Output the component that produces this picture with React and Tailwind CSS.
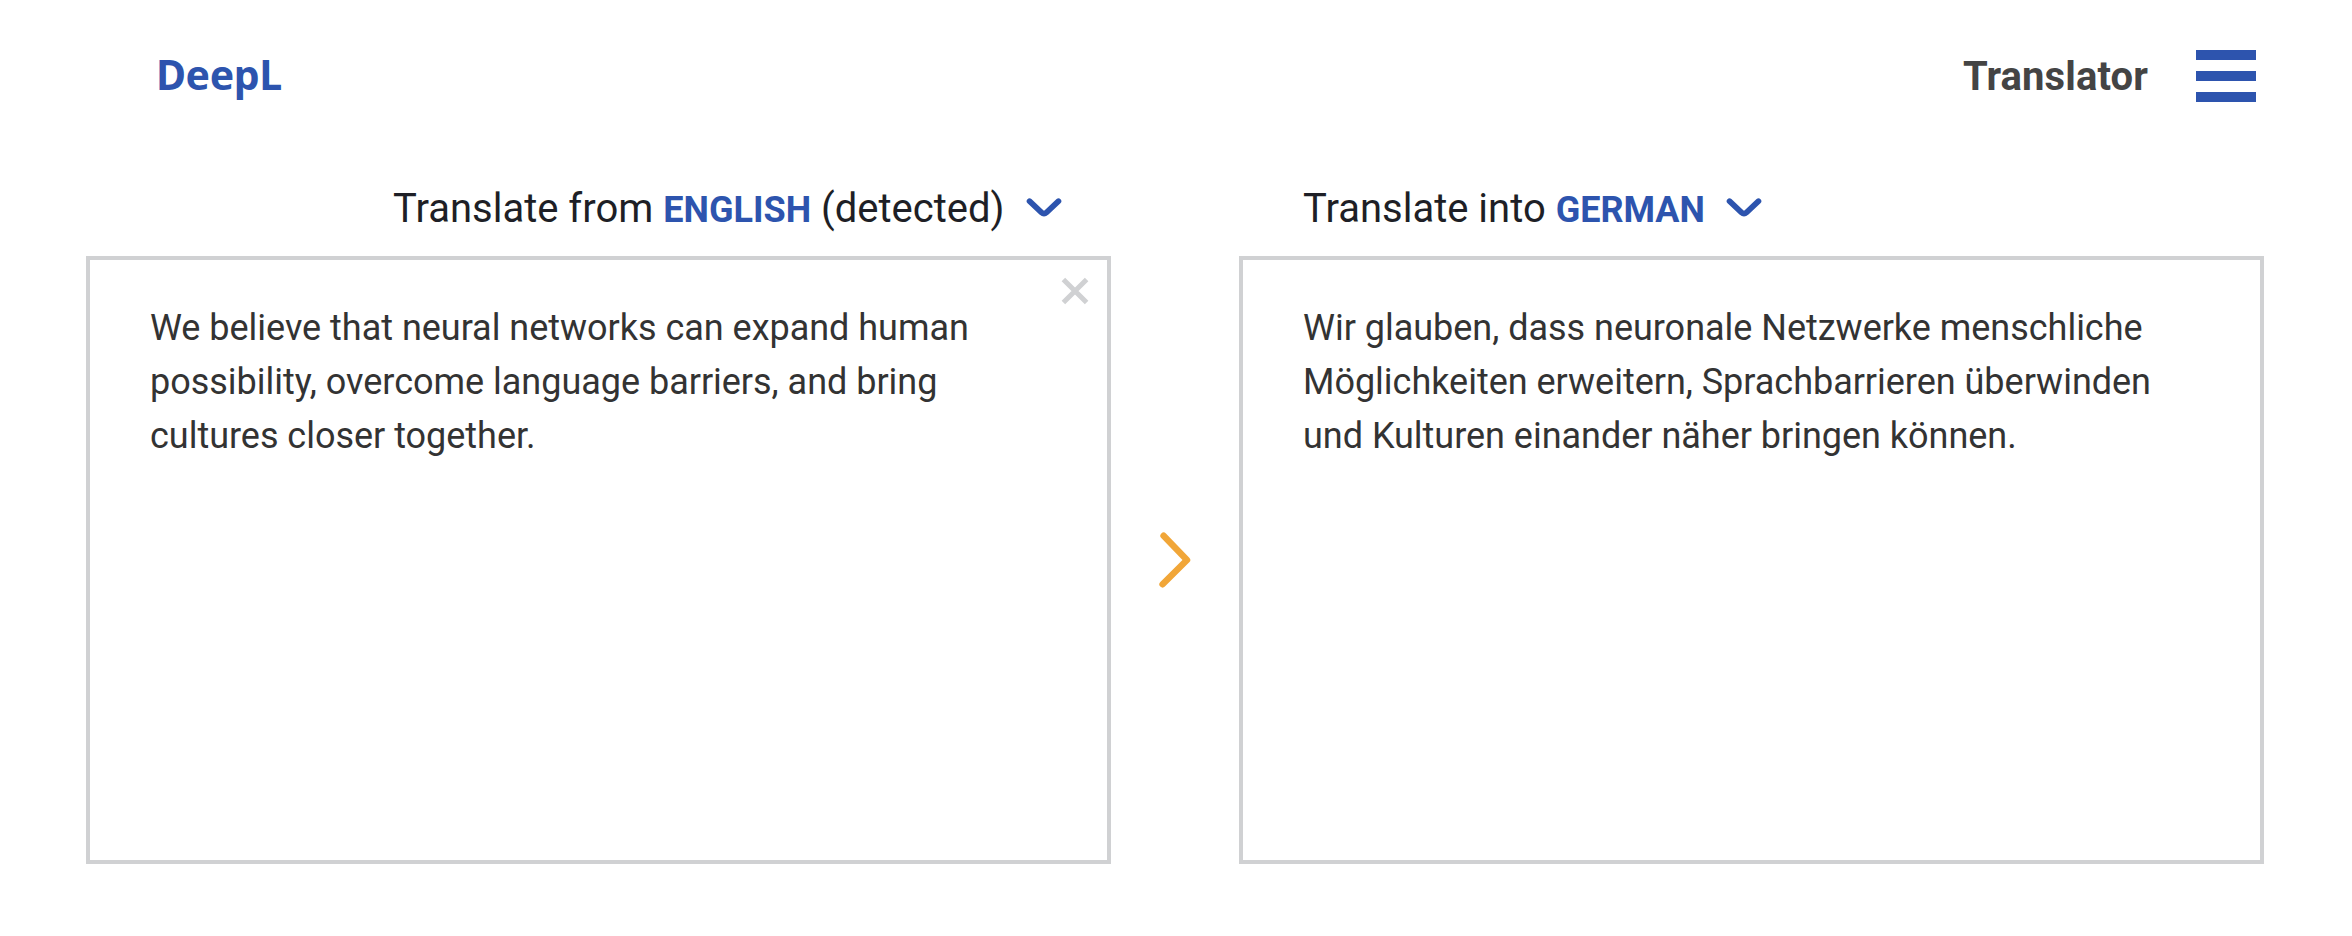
function Chevron() {
  return (
    <svg className="h-6 w-9 shrink-0" viewBox="0 0 36 24" fill="none">
      <path d="M3.5 4.1L15.4 15.4Q18 17.8 20.6 15.4L32.5 4.1" stroke="#2d54ae" strokeWidth="5.6" strokeLinecap="round" strokeLinejoin="round" />
    </svg>
  );
}

const source = [
  "We believe that neural networks can expand human",
  "possibility, overcome language barriers, and bring",
  "cultures closer together.",
];

const target = [
  "Wir glauben, dass neuronale Netzwerke menschliche",
  "Möglichkeiten erweitern, Sprachbarrieren überwinden",
  "und Kulturen einander näher bringen können.",
];

export default function App() {
  return (
    <div className="h-[936px] w-[2352px] overflow-hidden bg-white font-[Roboto,sans-serif] text-[#1e1f26]">
      <header className="flex h-[152px] items-center justify-between pr-24 pl-[156px]">
        <div className="pb-[3px] font-['Noto_Sans',sans-serif] text-[41px] leading-none font-bold tracking-[-0.4px] text-[#2d54ae]">
          DeepL
        </div>
        <div className="flex items-center gap-12">
          <span className="pt-0.5 text-[40px] leading-[60px] font-bold tracking-[0.1px] text-[#444]">Translator</span>
          <div className="flex w-[60px] flex-col gap-[11px]">
            <span className="h-2.5 bg-[#2d54ae]" />
            <span className="h-2.5 bg-[#2d54ae]" />
            <span className="h-2.5 bg-[#2d54ae]" />
          </div>
        </div>
      </header>

      <main className="grid grid-cols-[1025px_128px_1025px] pl-[86px]">
        {/* Language pickers */}
        <div className="flex h-[104px] items-center gap-[22px] pt-2.5 pl-[307px] text-[40px]">
          <span className="whitespace-nowrap">
            Translate from <b className="text-[36px] text-[#2d54ae]">ENGLISH</b> (detected)
          </span>
          <Chevron />
        </div>
        <div />
        <div className="flex h-[104px] items-center gap-[21px] pt-2.5 pl-[64px] text-[40px]">
          <span className="whitespace-nowrap">
            Translate into <b className="text-[36px] text-[#2d54ae]">GERMAN</b>
          </span>
          <Chevron />
        </div>

        {/* Text panels */}
        <section className="relative h-[608px] border-4 border-[#d0d1d3] px-[60px] pt-[41px] text-[36px] leading-[54px] tracking-[-0.02px] text-[#333]">
          {source.map((line) => (
            <p key={line} className="whitespace-nowrap">{line}</p>
          ))}
          <svg className="absolute top-[17px] right-[18px] size-7" viewBox="0 0 28 28">
            <path d="M2.4 2.4l23.2 23.2M25.6 2.4L2.4 25.6" stroke="#d0d1d3" strokeWidth="5" />
          </svg>
        </section>
        <div className="flex items-center justify-center">
          <svg className="h-14 w-8" viewBox="0 0 32 56" fill="none">
            <path d="M4.6 3.8L28 28L3.6 52.2" stroke="#f1a638" strokeWidth="6.5" strokeLinecap="round" strokeLinejoin="round" />
          </svg>
        </div>
        <section className="h-[608px] border-4 border-[#d0d1d3] px-[60px] pt-[41px] text-[36px] leading-[54px] tracking-[-0.02px] text-[#333]">
          {target.map((line) => (
            <p key={line} className="whitespace-nowrap">{line}</p>
          ))}
        </section>
      </main>
    </div>
  );
}
